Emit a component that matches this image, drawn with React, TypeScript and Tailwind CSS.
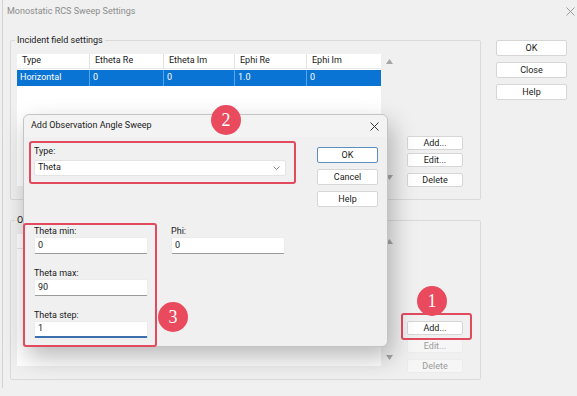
import React from "react";

const font = "font-['Roboto',sans-serif]";

function Btn({ label, w = "w-[56px]", h = "h-[14px]", disabled = false, def = false }: { label: string; w?: string; h?: string; disabled?: boolean; def?: boolean }) {
  return (
    <div
      className={`${w} ${h} flex items-center justify-center rounded-[2px] border ${
        disabled ? "border-[#ececec] bg-[#f6f6f6] text-[#9a9a9a]" : def ? "border-[#5a8fbf] bg-white text-[#1a1a1a]" : "border-[#d6d6d6] bg-white text-[#1a1a1a]"
      } text-[9px] leading-none`}
    >
      {label}
    </div>
  );
}

function UpArrow() {
  return (
    <svg width="7" height="5" viewBox="0 0 7 5"><path d="M0 5 L3.5 0 L7 5 Z" fill="#a6a6a6" /></svg>
  );
}
function DownArrow() {
  return (
    <svg width="7" height="5" viewBox="0 0 7 5"><path d="M0 0 L3.5 5 L7 0 Z" fill="#a6a6a6" /></svg>
  );
}

function Table({ rows }: { rows: boolean }) {
  const cols = [
    { t: "Type", w: "w-[72px]", v: "Horizontal" },
    { t: "Etheta Re", w: "w-[74px]", v: "0" },
    { t: "Etheta Im", w: "w-[71px]", v: "0" },
    { t: "Ephi Re", w: "w-[72px]", v: "1.0" },
    { t: "Ephi Im", w: "w-[75px]", v: "0" },
  ];
  return (
    <div className="flex">
      <div className="w-[364px] h-[132px] bg-white flex flex-col">
        <div className="flex h-[15px] border-b border-[#e8e8e8]">
          {cols.map((c, i) => (
            <div key={i} className={`${c.w} ${i > 0 ? "border-l border-[#e2e2e2]" : ""} flex items-center pl-[5px] text-[9px]`}>
              {rows ? c.t : ""}
            </div>
          ))}
        </div>
        {rows && (
          <div className="flex h-[16px] mt-[1px] bg-[#0a74d4] text-white">
            {cols.map((c, i) => (
              <div key={i} className={`${c.w} ${i > 0 ? "border-l border-[#5aa6ea]" : ""} flex items-center pl-[3px] text-[9px]`}>
                {c.v}
              </div>
            ))}
          </div>
        )}
      </div>
      <div className="w-[13px] h-[132px] flex flex-col items-center justify-between pl-[3px] pt-[5px] pb-[6px]">
        <UpArrow />
        <DownArrow />
      </div>
    </div>
  );
}

function Group({ label, children }: { label: string; children: React.ReactNode }) {
  return (
    <div className="relative h-[160px] w-[471px] border border-[#dadada] rounded-[2px]">
      <div className="absolute left-[4px] -top-[8px] bg-[#f0f0f0] px-[2px] text-[9px] leading-[14px] text-[#1a1a1a]">{label}</div>
      {children}
    </div>
  );
}

function Field({ label, value, focused = false }: { label: string; value: string; focused?: boolean }) {
  return (
    <div className="flex flex-col w-[114px]">
      <div className="h-[12px] leading-[12px] text-[9px] text-[#1a1a1a]">{label}</div>
      <div
        className={`h-[17px] bg-white border border-[#ececec] ${focused ? "border-b-2 border-b-[#3c6fae]" : "border-b border-b-[#9a9a9a]"} flex items-center pl-[3px] text-[9px] rounded-[2px]`}
      >
        {value}
      </div>
    </div>
  );
}

function Badge({ n, cls }: { n: string; cls: string }) {
  return (
    <div className={`absolute ${cls} w-[30px] h-[30px] rounded-full bg-[#ea4a5e] flex items-center justify-center text-white text-[18px] font-['Liberation_Serif',serif] leading-none`}>
      {n}
    </div>
  );
}

export default function App() {
  return (
    <div className={`relative w-[577px] h-[396px] overflow-hidden bg-[#f0f0f0] ${font} text-[#1a1a1a]`}>
      <div className="absolute left-[2px] top-0 bottom-[8px] w-[1px] bg-[#d2d2d2]" />
      {/* title bar */}
      <div className="h-[23px] flex items-center justify-between pl-[7px] pr-[2px] text-[#8c8c8c] text-[9px]">
        <span>Monostatic RCS Sweep Settings</span>
        <svg width="9" height="9" viewBox="0 0 9 9"><path d="M0.5 0.5 L8.5 8.5 M8.5 0.5 L0.5 8.5" stroke="#9a9a9a" strokeWidth="1" /></svg>
      </div>
      <div className="flex pl-[10px] pt-[17px] gap-[15px]">
        <div className="flex flex-col gap-[20px]">
          <Group label="Incident field settings">
            <div className="flex pl-[6px] pt-[13px]">
              <Table rows />
              <div className="flex flex-col ml-[13px] mt-[82px]">
                <Btn label="Add..." />
                <div className="h-[3px]" />
                <Btn label="Edit..." />
                <div className="h-[6px]" />
                <Btn label="Delete" />
              </div>
            </div>
          </Group>
          <Group label="Observation angle sweep">
            <div className="flex pl-[6px] pt-[13px]">
              <Table rows={false} />
              <div className="flex flex-col ml-[13px] mt-[87px]">
                <Btn label="Add..." />
                <div className="h-[4px]" />
                <Btn label="Edit..." disabled />
                <div className="h-[6px]" />
                <Btn label="Delete" disabled />
              </div>
            </div>
          </Group>
        </div>
        <div className="flex flex-col gap-[6px]">
          <Btn label="OK" w="w-[71px]" h="h-[16px]" />
          <Btn label="Close" w="w-[71px]" h="h-[16px]" />
          <Btn label="Help" w="w-[71px]" h="h-[16px]" />
        </div>
      </div>

      {/* highlight around main Add */}
      <div className="absolute left-[401px] top-[313px] w-[71px] h-[27px] border-[2.5px] border-[#e24a5e] rounded-[3px]" />
      <Badge n="1" cls="left-[417px] top-[286px]" />

      {/* dialog */}
      <div className="absolute left-[23px] top-[114px] w-[365px] h-[233px] rounded-[6px] border border-[#c4c4c4] bg-[#f0f0f0] shadow-[4px_10px_24px_rgba(0,0,0,0.28)] flex flex-col">
        <div className="h-[22px] flex items-center justify-between pl-[7px] pr-[8px] bg-[#f3f3f3] rounded-t-[6px] text-[9px]">
          <span>Add Observation Angle Sweep</span>
          <svg width="9" height="9" viewBox="0 0 9 9"><path d="M0.5 0.5 L8.5 8.5 M8.5 0.5 L0.5 8.5" stroke="#333" strokeWidth="1" /></svg>
        </div>
        <div className="flex pl-[10px]">
          <div className="flex flex-col w-[252px] pt-[8px]">
            <div className="h-[12px] leading-[12px] text-[9px]">Type:</div>
            <div className="mt-[3px] h-[16px] bg-white border border-[#e4e4e4] rounded-[2px] flex items-center justify-between pl-[3px] pr-[5px] text-[9px]">
              <span>Theta</span>
              <svg width="7" height="4" viewBox="0 0 7 4"><path d="M0.5 0.5 L3.5 3.5 L6.5 0.5" stroke="#777" fill="none" strokeWidth="0.9" /></svg>
            </div>
          </div>
          <div className="flex flex-col ml-[31px] pt-[10px] gap-[6px]">
            <Btn label="OK" w="w-[61px]" h="h-[16px]" def />
            <Btn label="Cancel" w="w-[61px]" h="h-[16px]" />
            <Btn label="Help" w="w-[61px]" h="h-[16px]" />
          </div>
        </div>
        <div className="flex pl-[10px] mt-[18px] gap-[23px]">
          <div className="flex flex-col gap-[13px]">
            <Field label="Theta min:" value="0" />
            <Field label="Theta max:" value="90" />
            <Field label="Theta step:" value="1" focused />
          </div>
          <div className="flex flex-col">
            <Field label="Phi:" value="0" />
          </div>
        </div>
        <div className="absolute left-[5px] top-[26px] w-[267px] h-[43px] border-[2.5px] border-[#e24a5e] rounded-[3px]" />
        <div className="absolute -left-[1px] top-[108px] w-[134px] h-[124px] border-[2.5px] border-[#e24a5e] rounded-[3px]" />
      </div>
      <Badge n="2" cls="left-[211px] top-[105px]" />
      <Badge n="3" cls="left-[158px] top-[302px]" />
    </div>
  );
}
